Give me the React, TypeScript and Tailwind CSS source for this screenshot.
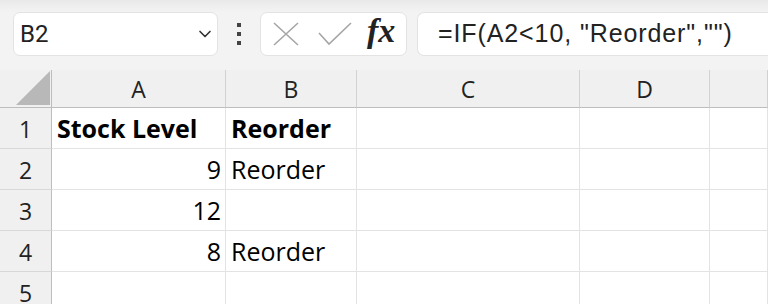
import { ChevronDown } from "lucide-react";

const COLS = ["A", "B", "C", "D", ""];

const ROWS: { n: number; a?: string; b?: string; bold?: boolean }[] = [
  { n: 1, a: "Stock Level", b: "Reorder", bold: true },
  { n: 2, a: "9", b: "Reorder" },
  { n: 3, a: "12" },
  { n: 4, a: "8", b: "Reorder" },
  { n: 5 },
];

function FormulaBar() {
  return (
    <div className="h-[70px] flex items-start pt-[12px] bg-gradient-to-b from-[#e9e9e9] to-[#f3f3f3] to-[12px]">
      <div className="ml-[13px] w-[205px] h-[44px] bg-white rounded-[7px] border border-[#e3e3e3] flex items-center pl-[6px] pr-[2px]">
        <span className="flex-1 text-[24px] text-[#222] font-['Roboto',sans-serif]">B2</span>
        <ChevronDown className="size-[20px] text-[#333]" strokeWidth={2} />
      </div>
      <div className="w-[42px] h-[44px] flex flex-col items-center justify-center gap-[5px]">
        <span className="size-[4px] bg-[#444]" />
        <span className="size-[4px] bg-[#444]" />
        <span className="size-[4px] bg-[#444]" />
      </div>
      <div className="w-[147px] h-[44px] bg-white rounded-[7px] border border-[#e3e3e3] flex items-center pl-[11px]">
        <svg width="28" height="24" viewBox="0 0 28 24" className="shrink-0">
          <path d="M2 1 L26 23 M26 1 L2 23" stroke="#a6a6a6" strokeWidth="1.6" fill="none" />
        </svg>
        <svg width="34" height="24" viewBox="0 0 34 24" className="ml-[18px] shrink-0">
          <path d="M1 11 L11 22 L33 1" stroke="#a6a6a6" strokeWidth="1.6" fill="none" />
        </svg>
        <span className="ml-[15px] text-[34px] leading-none italic font-bold text-[#222] font-['Liberation_Serif',serif] -mt-[6px]">fx</span>
      </div>
      <div className="ml-[10px] flex-1 h-[44px] bg-white rounded-l-[7px] border border-r-0 border-[#e3e3e3] flex items-center pl-[20px] overflow-hidden">
        <span className="whitespace-nowrap text-[25px] tracking-[0.9px] text-[#222] font-['Liberation_Sans',Arial,sans-serif]">
          =IF(A2&lt;10, "Reorder","")
        </span>
      </div>
    </div>
  );
}

export default function App() {
  return (
    <div className="w-[768px] h-[304px] overflow-hidden bg-[#f3f3f3]">
      <FormulaBar />
      <div className="grid grid-cols-[52px_174px_131px_223px_130px_1fr] grid-rows-[38px_41px_41px_41px_41px_41px] bg-white">
        <div className="bg-[#f0f0f0] border-r border-b border-[#bdbdbd] relative">
          <svg className="absolute right-[1px] bottom-[2px]" width="34" height="34" viewBox="0 0 34 34">
            <path d="M34 0 L34 34 L0 34 Z" fill="#b8b8b8" />
          </svg>
        </div>
        {COLS.map((c, i) => (
          <div
            key={`h${i}`}
            className="bg-[#f0f0f0] border-b border-[#bdbdbd] border-r border-r-[#d2d2d2] flex items-center justify-center text-[23px] text-[#222] font-['Open_Sans',sans-serif] pt-[2px]"
          >
            {c}
          </div>
        ))}
        {ROWS.map((r) => (
          <>
            <div
              key={`n${r.n}`}
              className="bg-[#f0f0f0] border-r border-[#bdbdbd] border-b border-b-[#d8d8d8] flex items-center justify-center text-[23px] text-[#222] font-['Open_Sans',sans-serif] pt-[2px]"
            >
              {r.n}
            </div>
            <div
              key={`a${r.n}`}
              className={`border-r border-b border-[#e3e3e3] flex items-center pt-[2px] text-[25px] text-black font-['Open_Sans',sans-serif] ${r.bold ? "font-bold pl-[5px]" : "justify-end pr-[4px]"}`}
            >
              {r.a}
            </div>
            <div
              key={`b${r.n}`}
              className={`border-r border-b border-[#e3e3e3] flex items-center pt-[2px] pl-[5px] text-[25px] text-black font-['Open_Sans',sans-serif] ${r.bold ? "font-bold" : ""}`}
            >
              {r.b}
            </div>
            <div key={`c${r.n}`} className="border-r border-b border-[#e3e3e3]" />
            <div key={`d${r.n}`} className="border-r border-b border-[#e3e3e3]" />
            <div key={`e${r.n}`} className="border-r border-b border-[#e3e3e3]" />
          </>
        ))}
      </div>
    </div>
  );
}
